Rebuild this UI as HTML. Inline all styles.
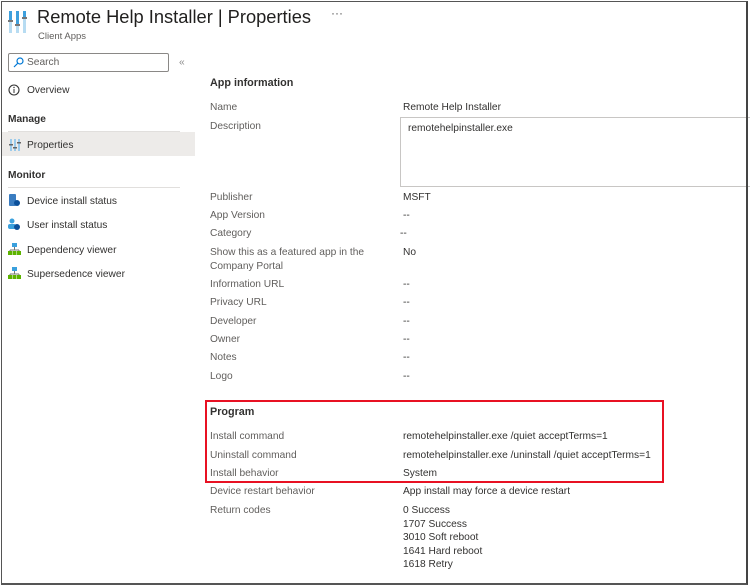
<!DOCTYPE html>
<html><head><style>
body{margin:0;width:750px;height:585px;overflow:hidden;background:#fff;font-family:"Liberation Sans",sans-serif;position:relative}
.f{position:absolute;left:1px;top:1px;width:744px;height:581px;border:1px solid #555;border-right:2px solid #444;border-bottom:2px solid #555;z-index:5}
.t{position:absolute;font-size:10.2px;line-height:14px;white-space:nowrap;color:#323130}
.l{color:#605e5c;left:210px}
.v{left:403px}
.b{font-weight:bold;color:#323130}
</style></head><body>
<div class="f"></div>
<svg style="position:absolute;left:8px;top:10px" width="20" height="24">
<rect x="1" y="1" width="3" height="22" fill="#b7dcf2"/><rect x="1" y="1" width="3" height="9" fill="#3ea0dd"/><rect x="0" y="10" width="5" height="2" fill="#777"/>
<rect x="8" y="1" width="3" height="22" fill="#b7dcf2"/><rect x="8" y="1" width="3" height="13" fill="#3ea0dd"/><rect x="7" y="14" width="5" height="2" fill="#777"/>
<rect x="15" y="1" width="3" height="22" fill="#b7dcf2"/><rect x="15" y="1" width="3" height="6" fill="#3ea0dd"/><rect x="14" y="7" width="5" height="2" fill="#777"/>
</svg>
<div class="t" style="left:37px;top:6px;font-size:18.3px;line-height:22px;color:#201f1e">Remote Help Installer | Properties</div>
<div class="t" style="left:331px;top:6px;font-size:12px;color:#555">···</div>
<div class="t" style="left:38px;top:30px;font-size:9.5px;color:#605e5c">Client Apps</div>
<div style="position:absolute;left:8px;top:53px;width:159px;height:17px;border:1px solid #8a8886;border-radius:2px"></div>
<svg style="position:absolute;left:13px;top:57px" width="11" height="11"><circle cx="7" cy="4" r="3" fill="none" stroke="#0078d4" stroke-width="1.2"/><line x1="5" y1="6" x2="1" y2="10" stroke="#0078d4" stroke-width="1.2"/></svg>
<div class="t" style="left:27px;top:56px;color:#605e5c">Search</div>
<div class="t" style="left:179px;top:56px;color:#888">«</div>
<svg style="position:absolute;left:8px;top:84px" width="12" height="12"><circle cx="6" cy="6" r="5" fill="none" stroke="#333" stroke-width="1.1"/><line x1="6" y1="5" x2="6" y2="9" stroke="#333"/><circle cx="6" cy="3.5" r=".7" fill="#333"/></svg>
<div class="t" style="left:27px;top:84px">Overview</div>
<div class="t b" style="left:8px;top:113px">Manage</div>
<div style="position:absolute;left:8px;top:131px;width:172px;height:1px;background:#e1dfdd"></div>
<div style="position:absolute;left:2px;top:132px;width:193px;height:24px;background:#edebe9"></div>
<svg style="position:absolute;left:9px;top:139px" width="12" height="12"><rect x="1" y="0" width="2" height="12" fill="#9ccbeb"/><rect x="5" y="0" width="2" height="12" fill="#9ccbeb"/><rect x="9" y="0" width="2" height="12" fill="#9ccbeb"/><rect x="0" y="5" width="4" height="1.5" fill="#666"/><rect x="4" y="8" width="4" height="1.5" fill="#666"/><rect x="8" y="3" width="4" height="1.5" fill="#666"/></svg>
<div class="t" style="left:27px;top:139px">Properties</div>
<div class="t b" style="left:8px;top:169px">Monitor</div>
<div style="position:absolute;left:8px;top:187px;width:172px;height:1px;background:#e1dfdd"></div>
<svg style="position:absolute;left:8px;top:194px" width="12" height="13"><rect x="1" y="0" width="7" height="12" rx="1" fill="#3a7cc0"/><circle cx="9" cy="9" r="3" fill="#0a4f9a"/></svg>
<div class="t" style="left:27px;top:195px">Device install status</div>
<svg style="position:absolute;left:8px;top:218px" width="12" height="13"><circle cx="4" cy="3" r="2.5" fill="#3aa0dd"/><rect x="0" y="6" width="8" height="5" rx="2" fill="#3aa0dd"/><circle cx="9" cy="9" r="3" fill="#0a4f9a"/></svg>
<div class="t" style="left:27px;top:219px">User install status</div>
<svg style="position:absolute;left:8px;top:243px" width="13" height="12"><rect x="4" y="0" width="5" height="4" fill="#3aa0dd"/><path d="M6.5 4v3M2 7h9M2 7v2M11 7v2" stroke="#777" fill="none"/><rect x="0" y="8" width="4" height="4" fill="#5db300"/><rect x="9" y="8" width="4" height="4" fill="#5db300"/><rect x="4.5" y="8" width="4" height="4" fill="#5db300"/></svg>
<div class="t" style="left:27px;top:244px">Dependency viewer</div>
<svg style="position:absolute;left:8px;top:267px" width="13" height="12"><rect x="4" y="0" width="5" height="4" fill="#3aa0dd"/><path d="M6.5 4v3M2 7h9M2 7v2M11 7v2" stroke="#777" fill="none"/><rect x="0" y="8" width="4" height="4" fill="#5db300"/><rect x="9" y="8" width="4" height="4" fill="#5db300"/><rect x="4.5" y="8" width="4" height="4" fill="#5db300"/></svg>
<div class="t" style="left:27px;top:268px">Supersedence viewer</div>

<div class="t b" style="left:210px;top:76px;font-size:10.8px">App information</div>
<div class="t l" style="top:101px">Name</div><div class="t v" style="top:101px">Remote Help Installer</div>
<div class="t l" style="top:120px">Description</div>
<div style="position:absolute;left:400px;top:117px;width:350px;height:68px;border:1px solid #c8c6c4"></div>
<div class="t" style="left:408px;top:122px">remotehelpinstaller.exe</div>
<div class="t l" style="top:191px">Publisher</div><div class="t v" style="top:191px">MSFT</div>
<div class="t l" style="top:209px">App Version</div><div class="t v" style="top:209px">--</div>
<div class="t l" style="top:227px">Category</div><div class="t" style="left:400px;top:227px">--</div>
<div class="t l" style="top:246px">Show this as a featured app in the</div><div class="t v" style="top:246px">No</div>
<div class="t l" style="top:260px">Company Portal</div>
<div class="t l" style="top:278px">Information URL</div><div class="t v" style="top:278px">--</div>
<div class="t l" style="top:296px">Privacy URL</div><div class="t v" style="top:296px">--</div>
<div class="t l" style="top:315px">Developer</div><div class="t v" style="top:315px">--</div>
<div class="t l" style="top:333px">Owner</div><div class="t v" style="top:333px">--</div>
<div class="t l" style="top:351px">Notes</div><div class="t v" style="top:351px">--</div>
<div class="t l" style="top:370px">Logo</div><div class="t v" style="top:370px">--</div>
<div style="position:absolute;left:205px;top:400px;width:455px;height:79px;border:2px solid #e81123"></div>
<div class="t b" style="left:210px;top:405px;font-size:10.8px">Program</div>
<div class="t l" style="top:430px">Install command</div><div class="t v" style="top:430px">remotehelpinstaller.exe /quiet acceptTerms=1</div>
<div class="t l" style="top:449px">Uninstall command</div><div class="t v" style="top:449px">remotehelpinstaller.exe /uninstall /quiet acceptTerms=1</div>
<div class="t l" style="top:467px">Install behavior</div><div class="t v" style="top:467px">System</div>
<div class="t l" style="top:485px">Device restart behavior</div><div class="t v" style="top:485px">App install may force a device restart</div>
<div class="t l" style="top:504px">Return codes</div>
<div class="t v" style="top:504px;line-height:13.6px">0 Success<br>1707 Success<br>3010 Soft reboot<br>1641 Hard reboot<br>1618 Retry</div>
</body></html>
